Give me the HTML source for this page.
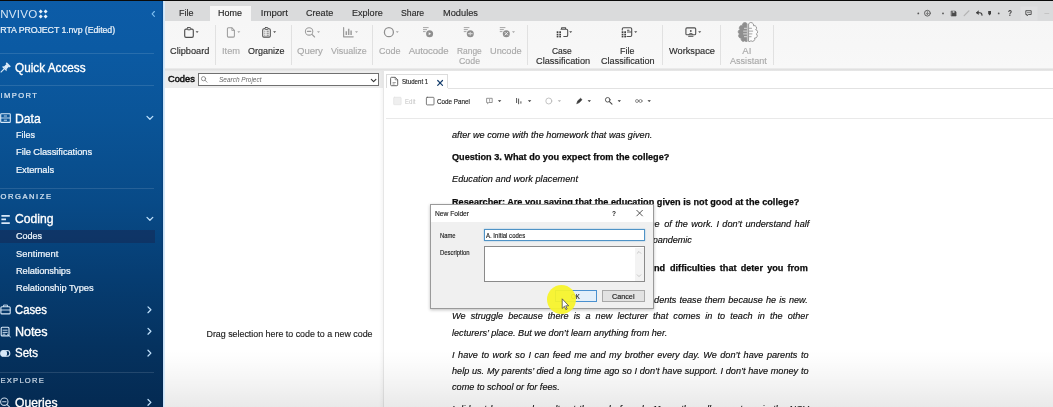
<!DOCTYPE html>
<html lang="en">
<head>
<meta charset="utf-8">
<title>NVivo - RTA PROJECT 1.nvp</title>
<style>
html,body{margin:0;padding:0;background:#fff;}
body{width:1053px;height:407px;overflow:hidden;position:relative;font-family:"Liberation Sans",sans-serif;}
#clip{position:absolute;left:0;top:0;width:1053px;height:407px;overflow:hidden;}
#app{position:absolute;left:-8px;top:-8px;width:1069px;height:423px;overflow:hidden;will-change:transform;transform:translateZ(0);}
#stage{position:absolute;left:8px;top:8px;width:1053px;height:407px;}
.bleed{position:absolute;}
.a{position:absolute;}
.t{position:absolute;white-space:pre;line-height:20px;height:20px;}
.sh{-webkit-text-stroke:.35px currentColor;}
.si{-webkit-text-stroke:.22px currentColor;}
.sl{-webkit-text-stroke:.15px currentColor;}
.sb{-webkit-text-stroke:.5px currentColor;}
.sbd{-webkit-text-stroke:.25px currentColor;}
#side{left:0;top:0;width:163px;height:407px;background:linear-gradient(180deg,#0c5ca8 0%,#0b5aa3 12%,#0a5497 30%,#084a87 50%,#063d72 68%,#05325f 85%,#042a52 100%);}
#sideedge{left:160.5px;top:0;width:4px;height:415px;background:linear-gradient(90deg,rgba(0,20,60,0) 0,rgba(0,20,60,.22) 50%,rgba(0,20,60,.22) 50%,#c4e0f8 52%,#d6e9fa 85%,#e9eef2 100%);}
.sdiv{position:absolute;left:0;width:153.5px;height:1px;background:rgba(255,255,255,.12);}
#tabs{left:164.5px;top:0;width:897px;height:21px;background:#dadbdc;}
#ribbon{left:164.5px;top:21px;width:897px;height:47px;background:linear-gradient(180deg,#f6f6f6,#f8f8f8);}
#ribbonline{left:164.5px;top:67.7px;width:897px;height:3px;background:linear-gradient(180deg,#f4f4f4 0,#e2e2e2 30%,#dfdfdf 70%,#eee 100%);}
.rsep{position:absolute;top:25px;width:1px;height:40px;background:#e1e1e1;}
#topbar{left:-8px;top:-8px;width:1069px;height:9px;background:#0a0a0a;}
#hometab{left:210px;top:6px;width:41px;height:15px;background:#f6f6f6;}
#codeshead{left:165px;top:70.5px;width:218px;height:17.6px;background:#ededed;}
#search{left:197.7px;top:72.7px;width:181.6px;height:13.8px;background:#fff;border:1px solid #707070;box-sizing:border-box;}
#split{left:383.3px;top:71px;width:1px;height:344px;background:#e6e6e6;}
#splitshade{left:379.3px;top:71px;width:4px;height:344px;background:linear-gradient(90deg,rgba(0,0,0,0),rgba(0,0,0,.035));}
#doctab{left:386px;top:74px;width:62px;height:14px;background:#fff;border:1px solid #dcdcdc;border-bottom:none;box-sizing:border-box;}
#doctabline{left:448px;top:87.5px;width:613px;height:1px;background:#e2e2e2;}
#toolline{left:386px;top:118px;width:675px;height:1px;background:#e9e9e9;}
#fade{left:164.5px;top:350px;width:897px;height:57px;background:linear-gradient(180deg,rgba(0,0,0,0) 0%,rgba(0,0,0,.012) 20%,rgba(0,0,0,.035) 48%,rgba(0,0,0,.06) 74%,rgba(0,0,0,.085) 100%);pointer-events:none;}
#selrow{left:0;top:229.6px;width:155px;height:13.2px;background:rgba(22,38,80,.5);}
/* dialog */
#dlg{left:430px;top:204px;width:223.5px;height:104.5px;background:#f0f0f0;box-sizing:border-box;border:1px solid #9a9a9a;box-shadow:0 1px 3px rgba(0,0,0,.25);}
#dlgtitle{left:0;top:0;width:221.5px;height:17.2px;background:#fff;}
#inp{left:484px;top:229.2px;width:161px;height:12px;background:#fff;box-sizing:border-box;border:1px solid #4f93c6;box-shadow:0 0 1.5px #8fbbdc;}
#ta{left:484px;top:246.3px;width:161px;height:35.5px;background:#fff;box-sizing:border-box;border:1px solid #8a8a8a;}
#tasb{left:634.5px;top:247.5px;width:9.5px;height:33px;background:#f3f3f3;}
#ok{left:554.5px;top:290.3px;width:42.5px;height:12.2px;background:#e3effa;box-sizing:border-box;border:1px solid #4a90cf;}
#cancel{left:602px;top:290.3px;width:42.5px;height:12.2px;background:#e2e2e2;box-sizing:border-box;border:1px solid #a8a8a8;}
#hl{left:546.9px;top:284.8px;width:29px;height:29px;border-radius:50%;background:rgba(248,244,40,.93);}
svg{position:absolute;overflow:visible;}
</style>
</head>
<body>
<div id="clip">
<div id="app">
<div id="stage">
<div class="bleed" style="left:0;top:0;width:1061px;height:415px;background:#fff"></div>
<div class="bleed" style="left:-8px;top:0;width:9px;height:407px;background:linear-gradient(180deg,#0c5ca8 0%,#0b5aa3 12%,#0a5497 30%,#084a87 50%,#063d72 68%,#05325f 85%,#042a52 100%)"></div>
<div class="bleed" style="left:-8px;top:407px;width:171px;height:8px;background:#042a52"></div>
<div class="bleed" style="left:164.5px;top:407px;width:897px;height:8px;background:#e9e9e9"></div>
<div class="a" id="side"></div>
<div class="a" id="sideedge"></div>
<div class="a" id="tabs"></div>
<div class="a" id="hometab"></div>
<div class="a" id="ribbon"></div>
<div class="a" id="ribbonline"></div>
<div class="a" id="codeshead"></div>
<div class="a" id="search"></div>
<div class="a" id="splitshade"></div>
<div class="a" id="split"></div>
<div class="a" id="doctab"></div>
<div class="a" id="doctabline"></div>
<div class="a" id="toolline"></div>
<div class="a" id="selrow"></div>
<div class="sdiv" style="top:53px"></div>
<div class="sdiv" style="top:85px"></div>
<div class="sdiv" style="top:188px"></div>
<div class="sdiv" style="top:371.5px"></div>
<div class="rsep" style="left:215px"></div>
<div class="rsep" style="left:290.5px"></div>
<div class="rsep" style="left:372px"></div>
<div class="rsep" style="left:527px"></div>
<div class="rsep" style="left:661.5px"></div>
<div class="rsep" style="left:720px"></div>
<div class="rsep" style="left:773px"></div>
<svg class="a" style="left:0;top:0" width="1053" height="407" viewBox="0 0 1053 407" fill="none" stroke-linecap="round" stroke-linejoin="round">
<!-- sidebar icons -->
<g stroke="#d9e9f8" stroke-width="1.1" fill="none">
  <!-- nvivo diamonds -->
  <g fill="#e9f2fb" stroke="none">
    <path d="M40.7 9.5l2 2-2 2-2-2z M45.6 9.5l2 2-2 2-2-2z M40.7 14.4l2 2-2 2-2-2z M45.6 14.4l2 2-2 2-2-2z"/>
  </g>
  <!-- collapse chevron -->
  <path d="M154.4 11.5l-2.300 2.400 2.300 2.400" stroke="#7fc0f2" stroke-width="1.100"/>
  <!-- pin -->
  <g transform="translate(.7 72.4) rotate(45)" fill="#dcebf9" stroke="none">
    <path d="M-.55 0V-5.2h1.1V0z"/>
    <path d="M-3.2 -4.9h6.4l-1-1.5h-4.400z"/>
    <path d="M-1.9 -6.2h3.8v-3.900h-3.8z"/>
    <path d="M-2.8 -9.9h5.6v-1.500h-5.6z"/>
  </g>
  <!-- data -->
  <rect x=".7" y="113.8" width="9.6" height="8.6" rx=".7"/>
  <path d="M.7 118h9.4M4.2 116h2.4M4.2 120.2h2.4" stroke-width=".9"/>
  <!-- coding -->
  <path d="M1.4 215.8h8.4M1.4 219.4h4.6M1.4 223.1h8.4" stroke-width="1.7" stroke-linecap="butt"/>
  <!-- cases -->
  <rect x=".9" y="306.7" width="9.3" height="7.2" rx="1"/>
  <path d="M3.6 306.5v-1.4h3.9v1.4M.9 310h9.3" stroke-width=".9"/>
  <!-- notes -->
  <rect x="1.2" y="327.3" width="7.8" height="8.6" rx="1"/>
  <path d="M3 330.2h4.2M3 332.4h4.2M3 334.2h2M7.4 334.2l3 2.7" stroke-width=".9"/>
  <!-- sets -->
  <circle cx="3.6" cy="353.4" r="2.9" fill="#d9e9f8"/>
  <circle cx="6.9" cy="353.4" r="2.9"/>
  <!-- queries -->
  <circle cx="4.3" cy="401.7" r="3.7" stroke="#c7d6e6"/>
  <path d="M2.6 401.7h3.4M7.1 404.6l2.6 2.6" stroke="#c7d6e6"/>
  <!-- chevrons -->
  <g stroke="#bfe0fb" stroke-width="1.25">
    <path d="M147 116.4l2.9 2.9 2.9-2.9"/>
    <path d="M147 217.4l2.9 2.9 2.9-2.9"/>
    <path d="M148 306.9l2.9 2.9-2.9 2.9"/>
    <path d="M148 328.4l2.9 2.9-2.9 2.9"/>
    <path d="M148 350.2l2.9 2.9-2.9 2.9"/>
    <path d="M148 399.5l2.9 2.9-2.9 2.9"/>
  </g>
</g>
<!-- ribbon icons : enabled -->
<g stroke="#4f4f4f" stroke-width="1.1">
  <!-- clipboard -->
  <rect x="184.7" y="29.1" width="8.6" height="8.2" rx="1.3" stroke-width="1.15"/>
  <rect x="187.3" y="27.6" width="3.4" height="2.2" rx=".6" fill="#f6f6f6" stroke-width="1"/>
  <path d="M195.6 31.3h3l-1.5 1.7z" fill="#4f4f4f" stroke="none"/>
  <!-- organize -->
  <rect x="262.7" y="28.8" width="7.6" height="8.3" rx="1.1" stroke-width="1.05"/>
  <rect x="265" y="27.5" width="3" height="1.9" rx=".5" fill="#f6f6f6" stroke-width=".9"/>
  <path d="M264.3 31.2h1M266.6 31.2h2.2M264.3 33.2h1M266.6 33.2h2.2M264.3 35.2h1M266.6 35.2h2.2" stroke-width=".8" stroke-linecap="butt"/>
  <path d="M273.1 31.3h3l-1.5 1.7z" fill="#4f4f4f" stroke="none"/>
  <!-- case classification -->
  <path d="M561 29.3h5.4q1.3 0 1.3 1.3v4.6q0 1.3-1.3 1.3h-2.6M561.6 29.1v-1.3h4v1.3" />
  <g fill="#3d3d3d" stroke="none"><rect x="556.7" y="31.3" width="1.7" height="1.7"/><rect x="559.3" y="31.3" width="1.7" height="1.7"/><rect x="556.7" y="33.7" width="1.7" height="1.7"/><rect x="559.3" y="33.7" width="1.7" height="1.7"/><rect x="556.7" y="35.9" width="1.7" height="1.5"/><rect x="559.3" y="35.9" width="1.7" height="1.5"/></g>
  <path d="M569.2 31.3h3l-1.5 1.7z" fill="#4f4f4f" stroke="none"/>
  <!-- file classification -->
  <path d="M622.3 30v-1q0-1.200 1.200-1.200h7q1.200 0 1.200 1.200v6.300q0 1.200-1.200 1.200h-3.500M627.500 32h4M627.500 30.300h1.500"/>
  <g fill="#3d3d3d" stroke="none"><rect x="621.700" y="31.300" width="1.700" height="1.700"/><rect x="624.300" y="31.300" width="1.700" height="1.700"/><rect x="621.700" y="33.700" width="1.700" height="1.700"/><rect x="624.300" y="33.700" width="1.700" height="1.700"/><rect x="621.700" y="35.900" width="1.700" height="1.500"/><rect x="624.300" y="35.900" width="1.700" height="1.500"/></g>
  <path d="M634.200 31.300h3l-1.500 1.700z" fill="#4f4f4f" stroke="none"/>
  <!-- workspace -->
  <rect x="685.900" y="27.900" width="9.800" height="6.900" rx="1.100"/>
  <circle cx="690.800" cy="31" r=".9" fill="#4f4f4f" stroke="none"/>
  <path d="M688.800 34.200q2-2 4 0M688.600 36.300h4.400" stroke-width="1"/>
  <path d="M698.200 31.300h3l-1.500 1.700z" fill="#4f4f4f" stroke="none"/>
</g>
<!-- ribbon icons : disabled -->
<g stroke="#9c9c9c" stroke-width="1.050">
  <!-- item -->
  <path d="M227.400 28.800q0-1 1-1h3.600l2.400 2.500v5.800q0 1-1 1h-5q-1 0-1-1z"/>
  <path d="M231.800 28v2.500h2.400" stroke-width=".8"/>
  <path d="M237.300 31.300h3l-1.500 1.700z" fill="#a6a6a6" stroke="none"/>
  <!-- query -->
  <circle cx="309.100" cy="31.400" r="3.700"/>
  <path d="M307.400 31.400h3.400M312 34.300l2.600 2.700" stroke-width="1.100"/>
  <path d="M317 31.300h3l-1.500 1.700z" fill="#a6a6a6" stroke="none"/>
  <!-- visualize -->
  <path d="M343.600 27.600v9.200h9.600" stroke-width="1.2"/>
  <path d="M346.300 31.200v3.800M348.700 28.800v6.200M351.100 30.400v4.600" stroke-width="1.500" stroke-linecap="butt"/>
  <path d="M355 31.300h3l-1.500 1.700z" fill="#a6a6a6" stroke="none"/>
  <!-- code -->
  <circle cx="388.900" cy="32.200" r="4.500" stroke-width="1.250" stroke="#8f8f8f"/>
  <path d="M395.800 31.300h3l-1.500 1.700z" fill="#a6a6a6" stroke="none"/>
  <!-- autocode -->
  <path d="M423 27.600h5.600M423 29.600h4M423 31.600h2.600" stroke-width=".9" stroke-linecap="butt"/>
  <circle cx="429.600" cy="33.700" r="3.500" fill="#8f8f8f" stroke="none"/>
  <path d="M428.700 32.200l2.400 1.500-2.400 1.500z" fill="#f6f6f6" stroke="none"/>
  <!-- range code -->
  <path d="M463.800 27.600h5.600M463.800 29.600h4M463.800 31.600h2.600" stroke-width=".9" stroke-linecap="butt"/>
  <circle cx="470.300" cy="33.700" r="3.500" fill="#8f8f8f" stroke="none"/>
  <path d="M468.300 33.700h1.300M471 33.700h1.300M470.200 32.300v2.800" stroke="#f6f6f6" stroke-width=".8"/>
  <!-- uncode -->
  <path d="M499.800 27.600h5.600M499.800 29.600h4M499.800 31.600h2.600" stroke-width=".9" stroke-linecap="butt"/>
  <circle cx="506.300" cy="33.700" r="3.500" fill="#8f8f8f" stroke="none"/>
  <path d="M505 32.400l2.600 2.600M507.600 32.400l-2.600 2.600" stroke="#f6f6f6" stroke-width=".9"/>
  <path d="M512 31.300h3l-1.500 1.700z" fill="#a6a6a6" stroke="none"/>
  <!-- AI brain -->
  <path d="M746.9 23.4A2.65 2.65 0 0 0 742.3 25.7A2.32 2.32 0 0 0 740.1 29.7A2.2 2.2 0 0 0 739.5 33.9A2.35 2.35 0 0 0 741.3 38.1A2.25 2.25 0 0 0 744.9 40.7A1.6 1.6 0 0 0 746.9 41.5Z" fill="#8e8e8e" stroke="#8e8e8e" stroke-width=".7"/>
  <path d="M748.9 23.4A2.65 2.65 0 0 1 753.5 25.7A2.32 2.32 0 0 1 755.7 29.7A2.2 2.2 0 0 1 756.3 33.9A2.35 2.35 0 0 1 754.5 38.1A2.25 2.25 0 0 1 750.9 40.7A1.6 1.6 0 0 1 748.9 41.5Z" fill="#fbfbfb" stroke="#8e8e8e" stroke-width=".9"/>
  <path d="M744 28.3h2.900M743.2 31.100h3.700M743.2 33.900h3.700M744 36.700h2.900" stroke="#ececec" stroke-width=".8" stroke-linecap="butt"/>
  <path d="M748.9 28.3h3M748.9 31.100h4.200M748.9 33.900h3.400M748.9 36.700h2.600" stroke="#8e8e8e" stroke-width=".8" stroke-linecap="butt"/>
</g>
<!-- top-right quick access -->
<g stroke="#555" stroke-width=".9">
  <circle cx="918.300" cy="13.400" r=".9" fill="#555" stroke="none"/>
  <circle cx="927.400" cy="13.200" r="2.900"/>
  <path d="M927.400 11.600v2.600M926.300 13.400l1.100 1.200 1.100-1.200" stroke-width=".7"/>
  <circle cx="943" cy="13.400" r=".9" fill="#555" stroke="none"/>
  <path d="M951.500 11.100h3.700l.9.9v4h-4.600z" fill="#4c4c4c" stroke="#4c4c4c" stroke-width=".6"/>
  <rect x="952.600" y="11.200" width="1.900" height="1.500" fill="#dadbdc" stroke="none"/>
  <path d="M964.200 15.600l4.700-4.700" stroke="#b3b3b3" stroke-width="1.300"/>
  <path d="M976.600 12.700h3.200q2.200 0 2.200 2.600" stroke="#3d3d3d" stroke-width="1.100" fill="none"/>
  <path d="M978.700 10.300l-2.700 2.400 2.700 2.400z" fill="#3d3d3d" stroke="none"/>
  <path d="M988.200 11h2.800v2.800l-1.400 1.800-1.400-1.800z" fill="#3d3d3d" stroke="none"/>
  <circle cx="998.700" cy="13.400" r=".9" fill="#555" stroke="none"/>
  <rect x="1020.500" y="6.500" width="17" height="14" fill="#dfe0e1" stroke="none"/>
  <path d="M1026.200 10.700h5v3.800h-2.800l-1.300 1.300v-1.300h-.9z" stroke="#4a4a4a" stroke-width=".9"/>
  <path d="M1027.400 12.600h2.600" stroke="#4a4a4a" stroke-width=".6"/>
  <path d="M1044.800 13.500h4" stroke="#c4c4c4" stroke-width="1"/>
</g>
<!-- search box -->
<g stroke="#7a7a7a" stroke-width=".8">
  <circle cx="203.500" cy="78.700" r="2.100"/>
  <path d="M205.100 80.300l1.900 1.900"/>
  <path d="M371.300 79.400l2.300 2.300 2.300-2.300" stroke="#333" stroke-width="1.100"/>
</g>
<!-- doc tab -->
<g stroke="#555" stroke-width=".9">
  <path d="M390.6 78.2q0-.9.9-.9h3.7l2.500 2.500v5q0 .9-.9.9h-5.300q-.9 0-.9-.9z"/>
  <path d="M395.2 77.500v2.300h2.300" stroke-width=".6"/>
  <path d="M393 82.600h2.400M393 84h1.200" stroke-width=".6"/>
  <path d="M437.700 80.500l4.800 4.800M442.500 80.500l-4.800 4.800" stroke="#163f6e" stroke-width="1.200"/>
</g>
<!-- doc toolbar -->
<g stroke="#4a4a4a" stroke-width=".8">
  <rect x="393.700" y="97.300" width="7.400" height="7.400" rx=".6" fill="#efefef" stroke="#e3e3e3"/>
  <rect x="426.400" y="97.300" width="7.600" height="7.600" rx=".8" fill="#fff" stroke="#5a5a5a"/>
  <!-- comment -->
  <path d="M487 98.300h5.200v4.200h-3.400l-1.200 1.200v-1.200h-.6z" stroke="#6a6a6a" stroke-width=".7"/>
  <path d="M489.600 99.400v2" stroke="#6a6a6a" stroke-width=".6"/>
  <path d="M497.900 100.200h3.400l-1.700 1.900z" fill="#333" stroke="none"/>
  <!-- bars -->
  <path d="M516.600 98v5M518.600 98.600v5.600M520.900 101.300v2.300" stroke="#555" stroke-width="1" stroke-linecap="butt"/>
  <path d="M527.900 100.200h3.400l-1.700 1.900z" fill="#333" stroke="none"/>
  <!-- circle -->
  <circle cx="548.800" cy="101" r="3" stroke="#b5b5b5" stroke-width=".8"/>
  <path d="M557.700 100.200h3.400l-1.700 1.900z" fill="#b5b5b5" stroke="none"/>
  <!-- highlighter -->
  <path d="M576.800 103.400l1-2.600 2.800-2.500 1.400 1.400-2.600 2.700z" fill="#3a3a3a" stroke="#3a3a3a" stroke-width=".6"/>
  <path d="M587.600 100.200h3.400l-1.700 1.900z" fill="#333" stroke="none"/>
  <!-- zoom -->
  <circle cx="607.700" cy="99.800" r="2.300" stroke="#4a4a4a" stroke-width=".9"/>
  <path d="M609.400 101.600l2.600 2.600" stroke="#4a4a4a" stroke-width="1.100"/>
  <path d="M617.600 100.200h3.400l-1.700 1.900z" fill="#333" stroke="none"/>
  <!-- link -->
  <circle cx="637" cy="101" r="1.500" stroke="#666" stroke-width=".7"/>
  <circle cx="640.600" cy="101" r="1.500" stroke="#666" stroke-width=".7"/>
  <path d="M647.500 100.200h3.400l-1.700 1.900z" fill="#333" stroke="none"/>
</g>
</svg>

<div class="t" style="left:0.2px;top:4.0px;font-size:11.6px;color:#d6e6f5;letter-spacing:0.264px;">NVIVO</div>
<div class="t si" style="left:0.3px;top:20.3px;font-size:8.8px;color:#eaf2fa;letter-spacing:-0.083px;">RTA PROJECT 1.nvp (Edited)</div>
<div class="t sh" style="left:15.0px;top:57.5px;font-size:12.6px;color:#ffffff;transform:scaleX(0.9339);transform-origin:0 50%;">Quick Access</div>
<div class="t si" style="left:0.5px;top:86.3px;font-size:7.6px;color:#d5e3f1;letter-spacing:1.399px;">IMPORT</div>
<div class="t sh" style="left:15.3px;top:108.5px;font-size:12.6px;color:#ffffff;transform:scaleX(0.9658);transform-origin:0 50%;">Data</div>
<div class="t si" style="left:16.0px;top:125.1px;font-size:9.3px;color:#f0f6fc;transform:scaleX(0.9674);transform-origin:0 50%;">Files</div>
<div class="t si" style="left:16.0px;top:142.3px;font-size:9.3px;color:#f0f6fc;letter-spacing:-0.049px;">File Classifications</div>
<div class="t si" style="left:16.0px;top:159.5px;font-size:9.3px;color:#f0f6fc;letter-spacing:-0.085px;">Externals</div>
<div class="t si" style="left:0.5px;top:187.2px;font-size:7.6px;color:#d5e3f1;letter-spacing:1.541px;">ORGANIZE</div>
<div class="t sh" style="left:15.0px;top:209.0px;font-size:12.6px;color:#ffffff;transform:scaleX(0.9644);transform-origin:0 50%;">Coding</div>
<div class="t si" style="left:16.0px;top:225.8px;font-size:9.3px;color:#f0f6fc;transform:scaleX(0.9674);transform-origin:0 50%;">Codes</div>
<div class="t si" style="left:16.0px;top:243.6px;font-size:9.3px;color:#f0f6fc;letter-spacing:0.071px;">Sentiment</div>
<div class="t si" style="left:16.0px;top:260.5px;font-size:9.3px;color:#f0f6fc;letter-spacing:-0.102px;">Relationships</div>
<div class="t si" style="left:16.0px;top:277.5px;font-size:9.3px;color:#f0f6fc;letter-spacing:-0.049px;">Relationship Types</div>
<div class="t sh" style="left:15.0px;top:300.0px;font-size:12.6px;color:#ffffff;transform:scaleX(0.8963);transform-origin:0 50%;">Cases</div>
<div class="t sh" style="left:15.0px;top:321.5px;font-size:12.6px;color:#ffffff;letter-spacing:-0.081px;">Notes</div>
<div class="t sh" style="left:15.0px;top:343.3px;font-size:12.6px;color:#ffffff;transform:scaleX(0.9126);transform-origin:0 50%;">Sets</div>
<div class="t si" style="left:0.5px;top:370.5px;font-size:7.6px;color:#c9d6e4;letter-spacing:1.232px;">EXPLORE</div>
<div class="t sh" style="left:15.0px;top:392.5px;font-size:12.6px;color:#ffffff;transform:scaleX(0.9635);transform-origin:0 50%;">Queries</div>
<div class="t sl" style="left:179.0px;top:3.3px;font-size:9.6px;color:#2b2b2b;transform:scaleX(0.9374);transform-origin:0 50%;">File</div>
<div class="t sl" style="left:218.3px;top:3.3px;font-size:9.6px;color:#1d1d1d;transform:scaleX(0.9338);transform-origin:0 50%;">Home</div>
<div class="t sl" style="left:260.8px;top:3.3px;font-size:9.6px;color:#2b2b2b;letter-spacing:-0.034px;">Import</div>
<div class="t sl" style="left:305.8px;top:3.3px;font-size:9.6px;color:#2b2b2b;transform:scaleX(0.9445);transform-origin:0 50%;">Create</div>
<div class="t sl" style="left:351.5px;top:3.3px;font-size:9.6px;color:#2b2b2b;transform:scaleX(0.9437);transform-origin:0 50%;">Explore</div>
<div class="t sl" style="left:401.0px;top:3.3px;font-size:9.6px;color:#2b2b2b;transform:scaleX(0.9059);transform-origin:0 50%;">Share</div>
<div class="t sl" style="left:442.5px;top:3.3px;font-size:9.6px;color:#2b2b2b;transform:scaleX(0.9651);transform-origin:0 50%;">Modules</div>
<div class="t sl" style="left:169.8px;top:40.5px;font-size:9.6px;color:#2d2d2d;transform:scaleX(0.9591);transform-origin:0 50%;">Clipboard</div>
<div class="t sl" style="left:222.3px;top:40.5px;font-size:9.6px;color:#a9a9a9;transform:scaleX(0.9640);transform-origin:0 50%;">Item</div>
<div class="t sl" style="left:248.4px;top:40.5px;font-size:9.6px;color:#2d2d2d;transform:scaleX(0.9374);transform-origin:0 50%;">Organize</div>
<div class="t sl" style="left:297.1px;top:40.5px;font-size:9.6px;color:#a9a9a9;letter-spacing:-0.088px;">Query</div>
<div class="t sl" style="left:331.3px;top:40.5px;font-size:9.6px;color:#a9a9a9;transform:scaleX(0.9337);transform-origin:0 50%;">Visualize</div>
<div class="t sl" style="left:378.7px;top:40.5px;font-size:9.6px;color:#a9a9a9;transform:scaleX(0.9417);transform-origin:0 50%;">Code</div>
<div class="t sl" style="left:408.7px;top:40.5px;font-size:9.6px;color:#a9a9a9;letter-spacing:-0.106px;">Autocode</div>
<div class="t sl" style="left:456.7px;top:40.5px;font-size:9.6px;color:#a9a9a9;transform:scaleX(0.8769);transform-origin:0 50%;">Range</div>
<div class="t sl" style="left:459.2px;top:51.2px;font-size:9.6px;color:#a9a9a9;transform:scaleX(0.9199);transform-origin:0 50%;">Code</div>
<div class="t sl" style="left:490.3px;top:40.5px;font-size:9.6px;color:#a9a9a9;transform:scaleX(0.9583);transform-origin:0 50%;">Uncode</div>
<div class="t sl" style="left:552.0px;top:40.5px;font-size:9.6px;color:#2d2d2d;transform:scaleX(0.8837);transform-origin:0 50%;">Case</div>
<div class="t sl" style="left:535.7px;top:51.2px;font-size:9.6px;color:#2d2d2d;transform:scaleX(0.9570);transform-origin:0 50%;">Classification</div>
<div class="t sl" style="left:619.8px;top:40.5px;font-size:9.6px;color:#2d2d2d;transform:scaleX(0.9309);transform-origin:0 50%;">File</div>
<div class="t sl" style="left:601.0px;top:51.2px;font-size:9.6px;color:#2d2d2d;transform:scaleX(0.9481);transform-origin:0 50%;">Classification</div>
<div class="t sl" style="left:668.7px;top:40.5px;font-size:9.6px;color:#2d2d2d;transform:scaleX(0.9600);transform-origin:0 50%;">Workspace</div>
<div class="t sl" style="left:742.3px;top:40.5px;font-size:9.6px;color:#a9a9a9;letter-spacing:-0.039px;">AI</div>
<div class="t sl" style="left:729.6px;top:51.2px;font-size:9.6px;color:#a9a9a9;transform:scaleX(0.9451);transform-origin:0 50%;">Assistant</div>
<div class="t" style="left:1008.3px;top:3.4px;font-size:8.4px;color:#333;font-weight:bold;transform:scaleX(0.7805);transform-origin:0 50%;">?</div>
<div class="t sb" style="left:167.7px;top:69.2px;font-size:9.7px;color:#111;transform:scaleX(0.9566);transform-origin:0 50%;">Codes</div>
<div class="t" style="left:218.5px;top:69.5px;font-size:7.2px;color:#6a6a6a;font-style:italic;transform:scaleX(0.9016);transform-origin:0 50%;">Search Project</div>
<div class="t sl" style="left:206.5px;top:323.8px;font-size:8.9px;color:#222;letter-spacing:-0.006px;">Drag selection here to code to a new code</div>
<div class="t sl" style="left:402.1px;top:72.0px;font-size:7.6px;color:#222;transform:scaleX(0.8058);transform-origin:0 50%;">Student 1</div>
<div class="t" style="left:405.0px;top:91.8px;font-size:7.4px;color:#c4c4c4;transform:scaleX(0.8235);transform-origin:0 50%;">Edit</div>
<div class="t sl" style="left:437.0px;top:91.8px;font-size:7.6px;color:#222;transform:scaleX(0.8315);transform-origin:0 50%;">Code Panel</div>
<div class="t sl" style="left:452.0px;top:125.0px;font-size:9.15px;color:#0c0c0c;font-style:italic;letter-spacing:0.021px;">after we come with the homework that was given.</div>
<div class="t sbd" style="left:452.0px;top:147.0px;font-size:9.15px;color:#0c0c0c;font-weight:bold;letter-spacing:0.006px;">Question 3. What do you expect from the college?</div>
<div class="t sl" style="left:452.0px;top:169.0px;font-size:9.15px;color:#0c0c0c;font-style:italic;letter-spacing:0.043px;">Education and work placement</div>
<div class="t sbd" style="left:452.0px;top:191.9px;font-size:9.15px;color:#0c0c0c;font-weight:bold;letter-spacing:0.017px;">Researcher: Are you saying that the education given is not good at the college?</div>
<div class="t sl" style="left:452.0px;top:213.7px;font-size:9.15px;color:#0c0c0c;font-style:italic;word-spacing:3.588px;">Yes, because the lecturers don’t explain some</div>
<div class="t sl" style="left:664.2px;top:213.7px;font-size:9.15px;color:#0c0c0c;font-style:italic;word-spacing:0.847px;">of the work. I don’t understand half</div>
<div class="t sl" style="left:452.0px;top:230.2px;font-size:9.15px;color:#0c0c0c;font-style:italic;word-spacing:13.938px;">of the work since the COVID-19</div>
<div class="t sl" style="left:652.8px;top:230.2px;font-size:9.15px;color:#0c0c0c;font-style:italic;letter-spacing:-0.085px;">pandemic</div>
<div class="t sbd" style="left:452.0px;top:258.4px;font-size:9.15px;color:#0c0c0c;font-weight:bold;word-spacing:6.274px;">Question 4. What are the challenges and</div>
<div class="t sbd" style="left:670.0px;top:258.4px;font-size:9.15px;color:#0c0c0c;font-weight:bold;word-spacing:1.622px;">difficulties that deter you from</div>
<div class="t sbd" style="left:452.0px;top:274.2px;font-size:9.15px;color:#0c0c0c;font-weight:bold;letter-spacing:-0.064px;">attending classes?</div>
<div class="t sl" style="left:452.0px;top:290.0px;font-size:9.15px;color:#0c0c0c;font-style:italic;word-spacing:12.543px;">The lecturer is new, and the students</div>
<div class="t sl" style="left:679.4px;top:290.0px;font-size:9.15px;color:#0c0c0c;font-style:italic;word-spacing:0.601px;">tease them because he is new.</div>
<div class="t sl" style="left:452.0px;top:305.5px;font-size:9.15px;color:#0c0c0c;font-style:italic;word-spacing:2.575px;">We struggle because there is a new lecturer that comes in to teach in the other</div>
<div class="t sl" style="left:452.0px;top:322.8px;font-size:9.15px;color:#0c0c0c;font-style:italic;letter-spacing:0.009px;">lecturers’ place. But we don’t learn anything from her.</div>
<div class="t sl" style="left:452.0px;top:344.9px;font-size:9.15px;color:#0c0c0c;font-style:italic;word-spacing:1.001px;">I have to work so I can feed me and my brother every day. We don’t have parents to</div>
<div class="t sl" style="left:452.0px;top:360.7px;font-size:9.15px;color:#0c0c0c;font-style:italic;word-spacing:0.191px;">help us. My parents’ died a long time ago so I don’t have support. I don’t have money to</div>
<div class="t sl" style="left:452.0px;top:376.9px;font-size:9.15px;color:#0c0c0c;font-style:italic;letter-spacing:0.006px;">come to school or for fees.</div>
<div class="t sl" style="left:452.0px;top:399.0px;font-size:9.15px;color:#0c0c0c;font-style:italic;word-spacing:1.044px;">I did not have good results at the end of grade 11, so the college put me in the NCV</div>
<div class="a" id="fade"></div>
<div class="a" id="dlg"><div class="a" id="dlgtitle"></div></div>
<div class="a" id="inp"></div>
<div class="a" id="ta"></div>
<div class="a" id="tasb"></div>
<div class="a" id="ok"></div>
<div class="a" id="cancel"></div>
<div class="t sl" style="left:435.0px;top:203.8px;font-size:7.6px;color:#1a1a1a;transform:scaleX(0.8757);transform-origin:0 50%;">New Folder</div>
<div class="t" style="left:612.0px;top:203.5px;font-size:8px;color:#222;font-weight:bold;transform:scaleX(0.8179);transform-origin:0 50%;">?</div>
<div class="t sl" style="left:439.7px;top:225.7px;font-size:7.2px;color:#1a1a1a;transform:scaleX(0.8130);transform-origin:0 50%;">Name</div>
<div class="t sl" style="left:486.0px;top:225.7px;font-size:7.2px;color:#1a1a1a;transform:scaleX(0.8385);transform-origin:0 50%;">A. Initial codes</div>
<div class="t sl" style="left:439.7px;top:243.1px;font-size:7.2px;color:#1a1a1a;transform:scaleX(0.8233);transform-origin:0 50%;">Description</div>
<div class="t sl" style="left:571.3px;top:286.5px;font-size:7.4px;color:#1a1a1a;transform:scaleX(0.8140);transform-origin:0 50%;">OK</div>
<div class="t sl" style="left:612.0px;top:286.7px;font-size:7.2px;color:#1a1a1a;letter-spacing:0.021px;">Cancel</div>
<svg class="a" style="left:0;top:0" width="1053" height="407" viewBox="0 0 1053 407" fill="none" stroke-linecap="round" stroke-linejoin="round">
  <path d="M636.800 210.300l5.600 5.600M642.400 210.300l-5.600 5.600" stroke="#2a2a2a" stroke-width=".8"/>
  <path d="M637.200 253.300l1.800-1.800 1.800 1.800" stroke="#bdbdbd" stroke-width=".8"/>
  <path d="M637.200 274.800l1.800 1.800 1.800-1.800" stroke="#bdbdbd" stroke-width=".8"/>
</svg>

<div class="a" id="hl"></div>
<svg class="a" style="left:0;top:0" width="1053" height="407" viewBox="0 0 1053 407" fill="none" stroke-linejoin="round">
  <path d="M562.2 298.8v9.600l2.200-2.100 1.500 3.300 1.300-.6-1.500-3.200h3z" fill="#fff" stroke="#333" stroke-width=".7"/>
</svg>

<div class="a" id="topbar"></div>
</div>
</div>
</div>
</body>
</html>
